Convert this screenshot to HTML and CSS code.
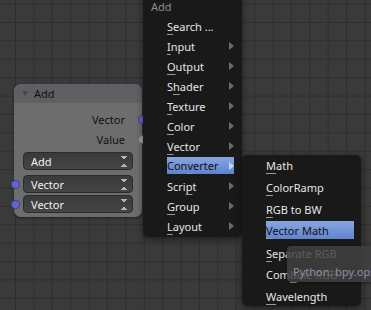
FILE: index.html
```html
<!DOCTYPE html>
<html lang="en">

<head>
    <meta charset="UTF-8">
    <meta name="viewport" content="width=device-width, initial-scale=1.0">
    <link rel="stylesheet" href="styles.css">
    <title>Node Editor | Add</title>
</head>

<body>
    <div class="editor">
        <div class="node">
            <div class="node-header">
                <span class="collapse"></span>
                <span>Add</span>
            </div>
            <div class="node-outputs">
                <div class="node-output">
                    <span>Vector</span>
                    <span class="socket socket-out vec"></span>
                </div>
                <div class="node-output">
                    <span>Value</span>
                    <span class="socket socket-out val"></span>
                </div>
            </div>
            <div class="select select-first">
                <span>Add</span>
                <span class="updown"></span>
            </div>
            <div class="select">
                <span class="socket socket-in vec"></span>
                <span>Vector</span>
                <span class="updown"></span>
            </div>
            <div class="select">
                <span class="socket socket-in vec"></span>
                <span>Vector</span>
                <span class="updown"></span>
            </div>
        </div>

        <div class="menu main-menu">
            <div class="menu-title">Add</div>
            <div class="menu-item"><span><u>S</u>earch ...</span></div>
            <div class="menu-item"><span><u>I</u>nput</span><i class="arrow"></i></div>
            <div class="menu-item"><span><u>O</u>utput</span><i class="arrow"></i></div>
            <div class="menu-item"><span>S<u>h</u>ader</span><i class="arrow"></i></div>
            <div class="menu-item"><span><u>T</u>exture</span><i class="arrow"></i></div>
            <div class="menu-item"><span><u>C</u>olor</span><i class="arrow"></i></div>
            <div class="menu-item"><span><u>V</u>ector</span><i class="arrow"></i></div>
            <div class="menu-item active"><span>Con<u>v</u>erter</span><i class="arrow"></i></div>
            <div class="menu-item"><span>Scri<u>p</u>t</span><i class="arrow"></i></div>
            <div class="menu-item"><span><u>G</u>roup</span><i class="arrow"></i></div>
            <div class="menu-item"><span><u>L</u>ayout</span><i class="arrow"></i></div>
        </div>

        <div class="menu sub-menu">
            <div class="menu-item"><span><u>M</u>ath</span></div>
            <div class="menu-item"><span><u>C</u>olorRamp</span></div>
            <div class="menu-item"><span><u>R</u>GB to BW</span></div>
            <div class="menu-item active"><span><u>V</u>ector Math</span></div>
            <div class="menu-item"><span><u>S</u>eparate RGB</span></div>
            <div class="menu-item"><span>Com<u>b</u>ine RGB</span></div>
            <div class="menu-item"><span><u>W</u>avelength</span></div>
        </div>

        <div class="tooltip">
            <span>Python: bpy.ops</span>
        </div>
    </div>
</body>

</html>
```

FILE: styles.css
```css
* {
    box-sizing: border-box;
    margin: 0;
    padding: 0;
}

body {
    width: 371px;
    height: 310px;
    overflow: hidden;
    font-family: "Noto Sans", "Open Sans", sans-serif;
    font-size: 11px;
}

.editor {
    position: relative;
    width: 371px;
    height: 310px;
    overflow: hidden;
    background-color: #3a3a3a;
    background-image:
        linear-gradient(to right, #2e2e2e 1px, transparent 1px),
        linear-gradient(to bottom, #2e2e2e 1px, transparent 1px);
    background-size: 18.4px 18.4px;
    background-position: 15px 3.6px;
}

/* node */

.node {
    position: absolute;
    left: 14px;
    top: 84px;
    width: 128px;
    height: 133px;
    background-color: #6d6d6d;
    border-radius: 7px;
    box-shadow: 0 1px 3px rgba(0, 0, 0, 0.45);
    color: #111;
}

.node-header {
    display: flex;
    align-items: center;
    gap: 6px;
    height: 19px;
    padding-left: 8px;
    background-color: #5f6063;
    border-radius: 7px 7px 0 0;
}

.collapse {
    width: 0;
    height: 0;
    border-left: 3.5px solid transparent;
    border-right: 3.5px solid transparent;
    border-top: 5px solid #464749;
}

.node-outputs {
    padding-top: 6px;
}

.node-output {
    position: relative;
    display: flex;
    justify-content: flex-end;
    align-items: center;
    height: 20px;
    padding-right: 17px;
}

.socket {
    position: absolute;
    width: 9px;
    height: 9px;
    border-radius: 50%;
    top: 50%;
    margin-top: -4.5px;
    border: 1px solid rgba(0, 0, 0, 0.35);
}

.socket-out {
    right: -4.5px;
}

.socket-in {
    left: -13.5px;
}

.vec {
    background-color: #6464d0;
}

.val {
    background-color: #a1a1a1;
}

.select {
    position: relative;
    display: flex;
    align-items: center;
    justify-content: space-between;
    height: 18px;
    margin: 2px 9px 0;
    padding: 0 5px 0 7px;
    background: linear-gradient(#3a3a3a, #454545);
    border: 1px solid #2c2c2c;
    border-radius: 4px;
    color: #f0f0f0;
}

.select-first {
    margin-top: 3px;
    margin-bottom: 5px;
}

.updown {
    width: 6px;
    height: 11px;
    background:
        linear-gradient(to top right, transparent 50%, #b4b4b4 50%) 0 0 / 3px 4px no-repeat,
        linear-gradient(to top left, transparent 50%, #b4b4b4 50%) 3px 0 / 3px 4px no-repeat,
        linear-gradient(to bottom right, transparent 50%, #b4b4b4 50%) 0 7px / 3px 4px no-repeat,
        linear-gradient(to bottom left, transparent 50%, #b4b4b4 50%) 3px 7px / 3px 4px no-repeat;
}

/* menus */

.menu {
    position: absolute;
    background-color: #191919;
    color: #e6e6e6;
    box-shadow: 0 2px 6px rgba(0, 0, 0, 0.5);
}

.menu u {
    text-decoration-color: #9a9a9a;
    text-underline-offset: 3px;
}

.main-menu {
    left: 143px;
    top: -3px;
    width: 99px;
    height: 240px;
    padding: 0 2px 0 1px;
    border-radius: 0 0 5px 5px;
}

.menu-title {
    height: 19px;
    line-height: 19px;
    padding-left: 7px;
    color: #8c8c8c;
}

.menu-item {
    display: flex;
    align-items: center;
    justify-content: space-between;
    height: 20px;
    padding: 0 6px 0 23px;
}

.main-menu .active {
    padding-top: 1px;
    padding-bottom: 2px;
    background: linear-gradient(#8aa8e2, #5a7ecb);
    background-clip: content-box;
    color: #111;
}

.arrow {
    width: 0;
    height: 0;
    border-top: 4px solid transparent;
    border-bottom: 4px solid transparent;
    border-left: 5px solid #6c6c6c;
}

.active .arrow {
    border-left-color: #c8d4ee;
}

.sub-menu {
    left: 242px;
    top: 155px;
    width: 119px;
    height: 151px;
    padding: 0 1px;
    border-radius: 5px;
}

.sub-menu .menu-item {
    height: 21.8px;
}

.sub-menu .active {
    padding-top: 1px;
    padding-bottom: 3px;
    background: linear-gradient(#8aa8e2, #5a7ecb);
    background-clip: content-box;
    color: #111;
}

/* tooltip */

.tooltip {
    position: absolute;
    left: 287px;
    top: 246px;
    width: 100px;
    height: 36px;
    padding: 18px 0 0 6px;
    background-color: rgba(64, 64, 64, 0.84);
    border-radius: 4px;
    box-shadow: 0 1px 3px rgba(0, 0, 0, 0.4);
    color: #8e8ea6;
    white-space: nowrap;
}
```
